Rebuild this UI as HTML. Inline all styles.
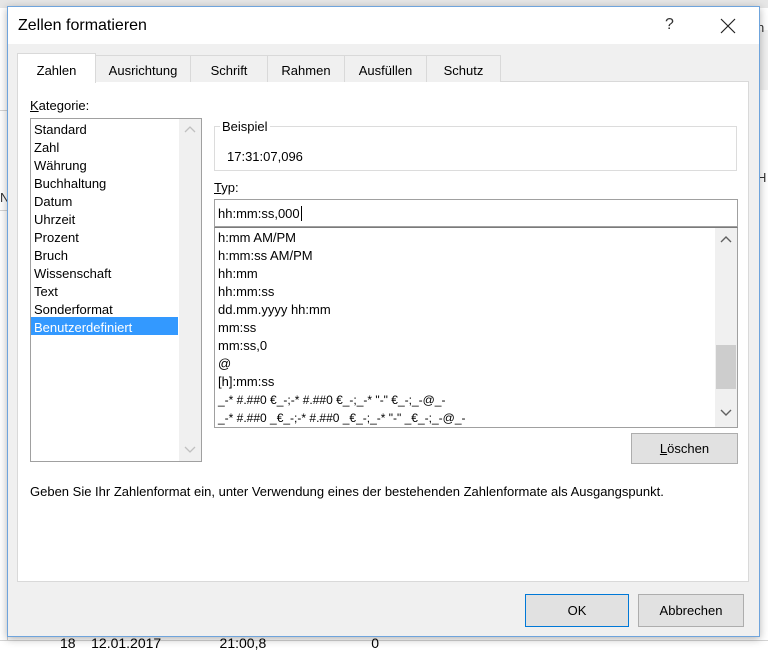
<!DOCTYPE html>
<html><head><meta charset="utf-8"><style>
*{margin:0;padding:0;box-sizing:border-box}
body{width:768px;height:644px;overflow:hidden;background:#fff;font-family:"Liberation Sans",sans-serif;font-size:13px;color:#000;position:relative}
.a{position:absolute}
</style></head><body>
<div class="a" style="left:0;top:0;width:768px;height:644px;background:#fff"></div>
<div class="a" style="left:0;top:0;width:768px;height:8px;background:#e6e6e6"></div>
<div class="a" style="left:757px;top:30px;width:11px;height:60px;background:#f0f0f0"></div>
<div class="a" style="left:0;top:40px;width:8px;height:600px;border-right:1px solid #ccc"></div>
<div class="a" style="left:0;top:110px;width:8px;height:1px;background:#d4d4d4"></div>
<div class="a" style="left:0;top:210px;width:8px;height:1px;background:#d4d4d4"></div>
<div class="a" style="left:0;top:640px;width:768px;height:1px;background:#d4d4d4"></div>
<div class="a" style="left:60px;top:635px;font-size:14px">18 &nbsp;&nbsp; 12.01.2017 &nbsp;&nbsp;&nbsp;&nbsp;&nbsp;&nbsp;&nbsp;&nbsp;&nbsp;&nbsp;&nbsp;&nbsp;&nbsp; 21:00,8 &nbsp;&nbsp;&nbsp;&nbsp;&nbsp;&nbsp;&nbsp;&nbsp;&nbsp;&nbsp;&nbsp;&nbsp;&nbsp;&nbsp;&nbsp;&nbsp;&nbsp;&nbsp;&nbsp;&nbsp;&nbsp;&nbsp;&nbsp;&nbsp;&nbsp; 0</div>
<div class="a" style="left:757px;top:20px;font-size:13px;color:#333">n</div>
<div class="a" style="left:757px;top:170px;font-size:13px;color:#333">H</div>
<div class="a" style="left:0;top:190px;font-size:13px;color:#333">N</div>
<div class="a" style="left:7px;top:6px;width:753px;height:631px;background:#f0f0f0;border:1px solid #6fa4dc;box-shadow:0 2px 8px rgba(0,0,0,.3)"></div>
<div class="a" style="left:8px;top:7px;width:751px;height:37px;background:#fff"></div>
<div class="a" style="left:18px;top:17px;font-size:16px">Zellen formatieren</div>
<div class="a" style="left:665px;top:16px;font-size:16px;color:#333">?</div>
<svg class="a" style="left:720px;top:18px" width="16" height="16"><path d="M1 1L15 15M15 1L1 15" stroke="#222" stroke-width="1.2"/></svg>
<div class="a" style="left:17px;top:81px;width:732px;height:501px;background:#fff;border:1px solid #d9d9d9"></div>
<div class="a" style="left:95px;top:55px;width:96px;height:27px;border:1px solid #d9d9d9;border-bottom:none;background:#f0f0f0;text-align:center;line-height:29px">Ausrichtung</div>
<div class="a" style="left:190px;top:55px;width:78px;height:27px;border:1px solid #d9d9d9;border-bottom:none;background:#f0f0f0;text-align:center;line-height:29px">Schrift</div>
<div class="a" style="left:267px;top:55px;width:78px;height:27px;border:1px solid #d9d9d9;border-bottom:none;background:#f0f0f0;text-align:center;line-height:29px">Rahmen</div>
<div class="a" style="left:344px;top:55px;width:83px;height:27px;border:1px solid #d9d9d9;border-bottom:none;background:#f0f0f0;text-align:center;line-height:29px">Ausfüllen</div>
<div class="a" style="left:426px;top:55px;width:75px;height:27px;border:1px solid #d9d9d9;border-bottom:none;background:#f0f0f0;text-align:center;line-height:29px">Schutz</div>
<div class="a" style="left:17px;top:53px;width:79px;height:30px;border:1px solid #d9d9d9;border-bottom:none;background:#fff;text-align:center;line-height:34px">Zahlen</div>
<div class="a" style="left:30px;top:98px"><u>K</u>ategorie:</div>
<div class="a" style="left:30px;top:118px;width:172px;height:344px;border:1px solid #a0a0a0;background:#fff"></div>
<div class="a" style="left:179px;top:119px;width:22px;height:342px;background:#f0f0f0"></div>
<svg class="a" style="left:184px;top:126px" width="12" height="8"><path d="M1 6L6 1L11 6" stroke="#c0c0c0" fill="none" stroke-width="1.3"/></svg>
<svg class="a" style="left:184px;top:446px" width="12" height="8"><path d="M1 1L6 6L11 1" stroke="#c0c0c0" fill="none" stroke-width="1.3"/></svg>
<div class="a" style="left:31px;top:317px;width:147px;height:18px;background:#3399ff"></div>
<div class="a" style="left:34px;top:121px;line-height:18px">Standard<br>Zahl<br>Währung<br>Buchhaltung<br>Datum<br>Uhrzeit<br>Prozent<br>Bruch<br>Wissenschaft<br>Text<br>Sonderformat<br><span style="color:#fff">Benutzerdefiniert</span></div>
<div class="a" style="left:214px;top:126px;width:523px;height:45px;border:1px solid #dcdcdc"></div>
<div class="a" style="left:220px;top:119px;background:#fff;padding:0 2px">Beispiel</div>
<div class="a" style="left:227px;top:149px">17:31:07,096</div>
<div class="a" style="left:214px;top:180px"><u>T</u>yp:</div>
<div class="a" style="left:214px;top:199px;width:524px;height:28px;border:1px solid #a0a0a0;background:#fff"></div>
<div class="a" style="left:218px;top:206px">hh:mm:ss,000<span style="border-left:1px solid #000;margin-left:1px"></span></div>
<div class="a" style="left:214px;top:227px;width:524px;height:201px;border:1px solid #a0a0a0;border-top:1px solid #7a7a7a;background:#fff"></div>
<div class="a" style="left:715px;top:228px;width:22px;height:199px;background:#f0f0f0"></div>
<div class="a" style="left:716px;top:345px;width:20px;height:44px;background:#cdcdcd"></div>
<svg class="a" style="left:720px;top:236px" width="12" height="8"><path d="M1 6L6 1L11 6" stroke="#606060" fill="none" stroke-width="1.4"/></svg>
<svg class="a" style="left:720px;top:409px" width="12" height="8"><path d="M1 1L6 6L11 1" stroke="#606060" fill="none" stroke-width="1.4"/></svg>
<div class="a" style="left:218px;top:229px;line-height:18px;white-space:nowrap">h:mm AM/PM<br>h:mm:ss AM/PM<br>hh:mm<br>hh:mm:ss<br>dd.mm.yyyy hh:mm<br>mm:ss<br>mm:ss,0<br>@<br>[h]:mm:ss<br><span style="font-size:12px">_-* #.##0 €_-;-* #.##0 €_-;_-* "-" €_-;_-@_-</span><br><span style="font-size:12px">_-* #.##0 _€_-;-* #.##0 _€_-;_-* "-" _€_-;_-@_-</span></div>
<div class="a" style="left:631px;top:433px;width:107px;height:31px;border:1px solid #adadad;background:#e1e1e1;text-align:center;line-height:30px"><u>L</u>öschen</div>
<div class="a" style="left:30px;top:484px">Geben Sie Ihr Zahlenformat ein, unter Verwendung eines der bestehenden Zahlenformate als Ausgangspunkt.</div>
<div class="a" style="left:525px;top:594px;width:104px;height:33px;border:1px solid #0078d7;background:#e1e1e1;text-align:center;line-height:32px">OK</div>
<div class="a" style="left:638px;top:594px;width:106px;height:33px;border:1px solid #adadad;background:#e1e1e1;text-align:center;line-height:32px">Abbrechen</div>
</body></html>
